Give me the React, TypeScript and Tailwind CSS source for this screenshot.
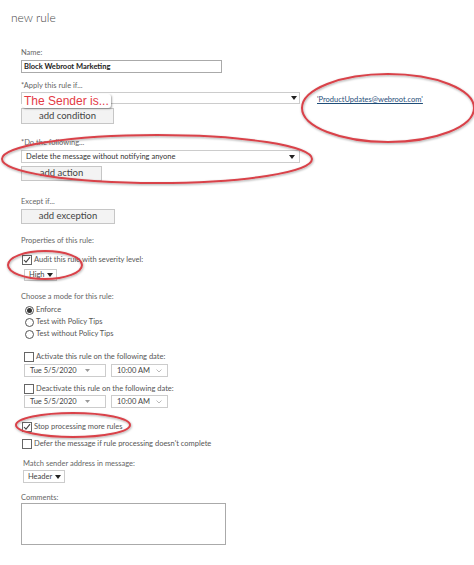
import React from "react";

const font = { fontFamily: 'Lato, "Open Sans", sans-serif' };

const Arrow = () => (
  <svg width="6" height="4" viewBox="0 0 6 4" className="shrink-0">
    <path d="M0 0 H6 L3 4 Z" fill="#222" />
  </svg>
);

const Label: React.FC<{ text: string; className?: string }> = ({ text, className }) => (
  <div className={`h-[10px] leading-[10px] text-[7.5px] text-[#666] ${className ?? ""}`}>{text}</div>
);

const Btn: React.FC<{ text: string; w: string; className?: string }> = ({ text, w, className }) => (
  <div
    className={`${w} h-[15px] flex items-center justify-center border border-[#c6c6c6] bg-[#f3f3f3] text-[9.5px] text-[#444] ${className ?? ""}`}
  >
    {text}
  </div>
);

const Check: React.FC<{ checked?: boolean }> = ({ checked }) => (
  <div className="w-[10px] h-[10px] border border-[#666] bg-white flex items-center justify-center shrink-0">
    {checked && (
      <svg width="8" height="8" viewBox="0 0 8 8">
        <path d="M1 4 L3 6.2 L7 1.2" stroke="#444" strokeWidth="1.1" fill="none" />
      </svg>
    )}
  </div>
);

const CheckRow: React.FC<{ text: string; checked?: boolean; className?: string }> = ({ text, checked, className }) => (
  <div className={`h-[11px] flex items-center gap-[2px] text-[7.5px] text-[#555] ${className ?? ""}`}>
    <Check checked={checked} />
    <span>{text}</span>
  </div>
);

const Radio: React.FC<{ text: string; on?: boolean }> = ({ text, on }) => (
  <div className="h-[12px] flex items-center gap-[2px] text-[7.5px] text-[#555]">
    <div className="w-[9px] h-[9px] rounded-full border border-[#555] flex items-center justify-center shrink-0">
      {on && <div className="w-[5px] h-[5px] rounded-full bg-[#333]" />}
    </div>
    <span>{text}</span>
  </div>
);

const DateRow: React.FC<{ className?: string }> = ({ className }) => (
  <div className={`flex gap-[5px] h-[13px] ml-[3px] ${className ?? ""}`}>
    <div className="w-[82px] h-full border border-[#ccc] flex items-center justify-between px-[5px] text-[7.5px] text-[#444]">
      <span>Tue 5/5/2020</span>
      <svg width="5" height="3" viewBox="0 0 5 3" className="mr-[10px]">
        <path d="M0 0 H5 L2.5 3 Z" fill="#999" />
      </svg>
    </div>
    <div className="w-[57px] h-full border border-[#ccc] flex items-center justify-between px-[5px] text-[7.5px] text-[#444]">
      <span>10:00 AM</span>
      <svg width="6" height="4" viewBox="0 0 6 4">
        <path d="M0.5 0.5 L3 3 L5.5 0.5" stroke="#aaa" strokeWidth="0.8" fill="none" />
      </svg>
    </div>
  </div>
);

export default function App() {
  return (
    <div className="relative w-[474px] h-[565px] bg-white overflow-hidden" style={font}>
      <div className="pt-[11px] pl-[11px] h-[25px] text-[12px] leading-[14px] font-light text-[#444]">new rule</div>

      <div className="pl-[21px]">
        <Label text="Name:" className="mt-[23px]" />
        <div className="mt-[2px] w-[201px] h-[13px] border border-[#aaa] flex items-center px-[2px] text-[7.5px] font-bold text-[#222]">
          Block Webroot Marketing
        </div>

        <Label text="*Apply this rule if..." className="mt-[8px]" />
        <div className="mt-[1px] w-[279px] h-[12px] border border-[#ccc] flex items-center justify-end px-[2px]">
          <Arrow />
        </div>
        <Btn text="add condition" w="w-[93px]" className="mt-[4px] h-[16px]" />

        <Label text="*Do the following..." className="mt-[14px]" />
        <div className="mt-[2px] w-[279px] h-[13px] border border-[#ccc] flex items-center justify-between px-[4px] text-[7.5px] text-[#333]">
          <span>Delete the message without notifying anyone</span>
          <Arrow />
        </div>
        <Btn text="add action" w="w-[81px]" className="mt-[3px]" />

        <Label text="Except if..." className="mt-[16px]" />
        <Btn text="add exception" w="w-[94px]" className="mt-[2px]" />

        <Label text="Properties of this rule:" className="mt-[12px]" />
        <CheckRow text="Audit this rule with severity level:" checked className="mt-[8px] ml-[1px]" />
        <div className="mt-[4px] ml-[3px] w-[33px] h-[12px] border border-[#ccc] flex items-center justify-between pl-[4px] pr-[3px] text-[7.5px] text-[#444]">
          <span>High</span>
          <Arrow />
        </div>

        <Label text="Choose a mode for this rule:" className="mt-[11px]" />
        <div className="mt-[2px] ml-[4px] flex flex-col">
          <Radio text="Enforce" on />
          <Radio text="Test with Policy Tips" />
          <Radio text="Test without Policy Tips" />
        </div>

        <CheckRow text="Activate this rule on the following date:" className="mt-[11px] ml-[3px]" />
        <DateRow className="mt-[2px]" />
        <CheckRow text="Deactivate this rule on the following date:" className="mt-[6px] ml-[3px]" />
        <DateRow className="mt-[1px]" />

        <CheckRow text="Stop processing more rules" checked className="mt-[13px] ml-[1px]" />
        <CheckRow text="Defer the message if rule processing doesn't complete" className="mt-[6px] ml-[1px]" />

        <Label text="Match sender address in message:" className="mt-[10px] ml-[2px]" />
        <div className="mt-[1px] ml-[2px] w-[42px] h-[13px] border border-[#ccc] flex items-center justify-between pl-[4px] pr-[3px] text-[7.5px] text-[#444]">
          <span>Header</span>
          <Arrow />
        </div>

        <Label text="Comments:" className="mt-[10px]" />
        <div className="w-[205px] h-[42px] border border-[#aaa]" />
      </div>

      {/* annotations */}
      <a className="absolute left-[317px] top-[94px] text-[7.5px] text-[#1f4e79] underline">'ProductUpdates@webroot.com'</a>

      <div
        className="absolute left-[22px] top-[94px] px-[2px] h-[14px] flex items-center bg-white rounded-[3px] shadow-[1px_1px_2px_rgba(0,0,0,0.35)] text-[12px] leading-none text-[#e43a45]"
        style={{ fontFamily: '"Liberation Sans", sans-serif' }}
      >
        The Sender is...
      </div>

      <svg className="absolute inset-0 pointer-events-none" width="474" height="565">
        <defs>
          <filter id="sh" x="-10%" y="-10%" width="120%" height="130%">
            <feDropShadow dx="0.5" dy="1" stdDeviation="0.8" floodColor="#000" floodOpacity="0.35" />
          </filter>
        </defs>
        <g fill="none" stroke="#d9424a" strokeWidth="2" filter="url(#sh)">
          <ellipse cx="388" cy="108" rx="86" ry="34" />
          <ellipse cx="157" cy="159" rx="155" ry="24" />
          <ellipse cx="45" cy="265" rx="37" ry="14" />
          <ellipse cx="73" cy="425" rx="57" ry="12" />
        </g>
      </svg>
    </div>
  );
}
